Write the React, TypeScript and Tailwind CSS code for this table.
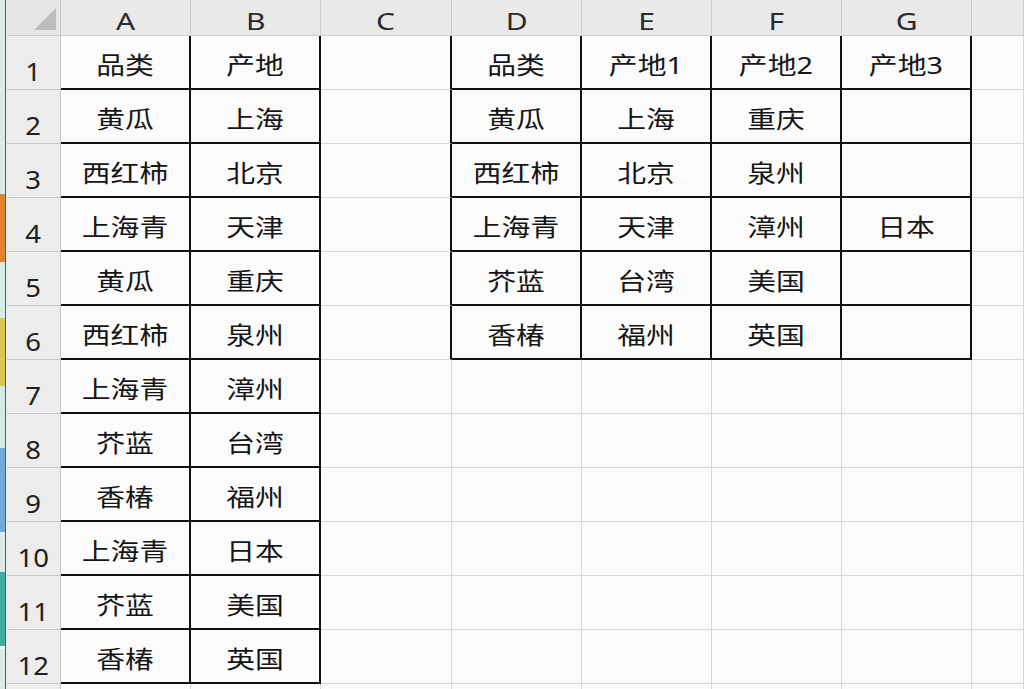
import React from 'react';

const cols = ['A', 'B', 'C', 'D', 'E', 'F', 'G', ''];

const left: string[][] = [
  ['品类', '产地'],
  ['黄瓜', '上海'],
  ['西红柿', '北京'],
  ['上海青', '天津'],
  ['黄瓜', '重庆'],
  ['西红柿', '泉州'],
  ['上海青', '漳州'],
  ['芥蓝', '台湾'],
  ['香椿', '福州'],
  ['上海青', '日本'],
  ['芥蓝', '美国'],
  ['香椿', '英国'],
];

const right: string[][] = [
  ['品类', '产地1', '产地2', '产地3'],
  ['黄瓜', '上海', '重庆', ''],
  ['西红柿', '北京', '泉州', ''],
  ['上海青', '天津', '漳州', '日本'],
  ['芥蓝', '台湾', '美国', ''],
  ['香椿', '福州', '英国', ''],
];

const cellText = (r: number, c: number): string => {
  if (r < left.length && c < 2) return left[r][c];
  if (r < right.length && c >= 3 && c <= 6) return right[r][c - 3];
  return '';
};

// which cells carry the thick black border on right / bottom
const thick = (r: number, c: number) => {
  const inLeft = r < 12 && c < 2;
  const inRight = r < 6 && c >= 3 && c <= 6;
  const edgeRight = inLeft || inRight || (r < 6 && c === 2);
  const edgeBottom = inLeft || inRight;
  return { edgeRight, edgeBottom };
};

function Corner() {
  return (
    <div className="h-[36px] bg-[#e6e6e6] border-r border-b border-[#c9c9c9] relative">
      <svg width="24" height="24" viewBox="0 0 24 24" className="absolute left-[26px] top-[7px]">
        <polygon points="23,1 23,23 1,23" fill="#bdbdbd" />
      </svg>
    </div>
  );
}

function Strip() {
  return (
    <div className="flex h-full">
      <div className="w-[5px] flex flex-col bg-[#dcebe9]">
        <div className="h-[194px]" />
        <div className="h-[68px] bg-[#df8430]" />
        <div className="h-[56px] bg-[#d7ebe8]" />
        <div className="h-[68px] bg-[#d9c84e]" />
        <div className="h-[62px] bg-[#d4ebe5]" />
        <div className="h-[84px] bg-[#74aad6]" />
        <div className="h-[40px] bg-[#dcebe9]" />
        <div className="h-[74px] bg-[#3fae9d]" />
        <div className="h-[3px] bg-white" />
      </div>
      <div className="w-[1px] bg-[#2f6e68]" />
      <div className="w-[1px] bg-[#e9eeee]" />
    </div>
  );
}

export default function App() {
  const rows = Array.from({ length: 13 }, (_, i) => i);
  return (
    <div
      className="w-[1024px] h-[689px] overflow-hidden flex bg-[#fcfbfc] text-[#151515]"
      style={{ fontFamily: '"Noto Sans", "Noto Sans CJK SC", sans-serif' }}
    >
      <Strip />
      <div className="flex-1 grid grid-cols-[54px_130px_130px_131px_130px_130px_130px_130px_1fr] grid-rows-[36px_repeat(13,54px)]">
        <Corner />
        {cols.map((c, i) => (
          <div
            key={'h' + i}
            className="bg-[#e9e9e9] border-r border-b border-[#cdcdcd] flex items-center justify-center pt-[6px]"
          >
            <span className="inline-block text-[24px] leading-none scale-x-[1.25] text-[#2a2a2a]">{c}</span>
          </div>
        ))}
        {rows.map((r) => (
          <React.Fragment key={r}>
            <div className="bg-[#ececec] border-r border-b border-[#c6c6c6] flex items-end justify-center pb-[5px]">
              {r < 12 && (
                <span className="inline-block text-[25px] leading-none scale-x-[1.1] text-[#202020]">{r + 1}</span>
              )}
            </div>
            {cols.map((_, c) => {
              const { edgeRight, edgeBottom } = thick(r, c);
              const rb = edgeRight ? 'border-r-2 border-r-[#111]' : 'border-r border-r-[#d8d8d8]';
              const bb = edgeBottom ? 'border-b-2 border-b-[#111]' : 'border-b border-b-[#d8d8d8]';
              return (
                <div key={c} className={`${rb} ${bb} flex items-center justify-center pt-[5px]`}>
                  <span className="inline-block text-[24px] leading-none scale-x-[1.2] whitespace-nowrap">
                    {cellText(r, c)}
                  </span>
                </div>
              );
            })}
          </React.Fragment>
        ))}
      </div>
    </div>
  );
}
